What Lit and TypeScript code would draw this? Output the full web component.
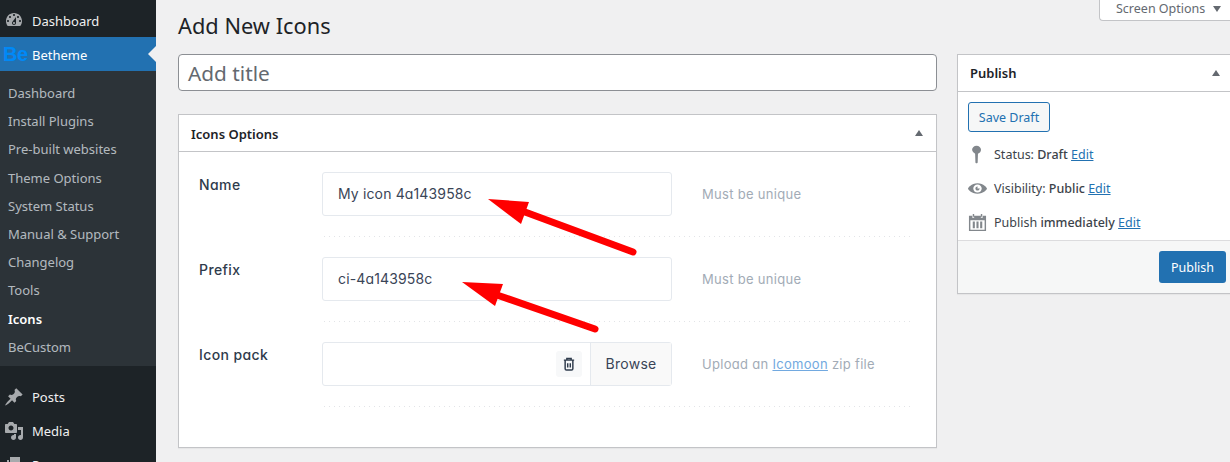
import { LitElement, css, html, svg } from "lit";
import { customElement } from "lit/decorators.js";

const SUBMENU = [
  "Dashboard",
  "Install Plugins",
  "Pre-built websites",
  "Theme Options",
  "System Status",
  "Manual & Support",
  "Changelog",
  "Tools",
  "Icons",
  "BeCustom",
];

const ICONS = {
  dashboard:
    "M3.76 16h12.48c1.1-1.37 1.76-3.11 1.76-5 0-4.42-3.58-8-8-8s-8 3.58-8 8c0 1.89.66 3.63 1.76 5zM10 4c.55 0 1 .45 1 1s-.45 1-1 1-1-.45-1-1 .45-1 1-1zM6 6c.55 0 1 .45 1 1s-.45 1-1 1-1-.45-1-1 .45-1 1-1zm8 0c.55 0 1 .45 1 1s-.45 1-1 1-1-.45-1-1 .45-1 1-1zm-5.37 5.55L12 7v6c0 1.1-.9 2-2 2s-2-.9-2-2c0-.57.24-1.08.63-1.45zM4 10c.55 0 1 .45 1 1s-.45 1-1 1-1-.45-1-1 .45-1 1-1zm12 0c.55 0 1 .45 1 1s-.45 1-1 1-1-.45-1-1 .45-1 1-1zm-5 3c0-.55-.45-1-1-1s-1 .45-1 1 .45 1 1 1 1-.45 1-1z",
  posts:
    "M10.44 3.02l1.82-1.82 6.36 6.35-1.83 1.82c-1.05-.68-2.48-.57-3.41.36l-.75.75c-.92.93-1.04 2.35-.35 3.41l-1.83 1.82-2.41-2.41-2.8 2.79c-.42.42-3.38 2.71-3.8 2.29s1.86-3.39 2.28-3.81l2.79-2.79L4.1 9.36l1.83-1.82c1.05.69 2.48.57 3.4-.36l.75-.75c.93-.92 1.05-2.35.36-3.41z",
  media:
    "M13 11V4c0-.55-.45-1-1-1h-1.67L9 1H5L3.67 3H2c-.55 0-1 .45-1 1v7c0 .55.45 1 1 1h10c.55 0 1-.45 1-1zM7 4.5c1.38 0 2.5 1.12 2.5 2.5S8.38 9.5 7 9.5 4.5 8.38 4.5 7 5.62 4.5 7 4.5zM14 6h5v10.5c0 1.38-1.12 2.5-2.5 2.5S14 17.88 14 16.5s1.12-2.5 2.5-2.5c.17 0 .34.02.5.05V9h-3V6zm-4 8.05V13h2v3.5c0 1.38-1.12 2.5-2.5 2.5S7 17.88 7 16.5 8.12 14 9.5 14c.17 0 .34.02.5.05z",
  pages: "M6 15V2h10v13H6zm-1 1h8v2H3V5h2v11z",
  status:
    "M9 .8c2.600 0 4.700 1.900 4.700 4.300 0 1.900-1.300 3.500-3.200 4.100l-.3 9c0 .6-.5 1-1.200 1s-1.200-.4-1.200-1l-.3-9C6.600 8.600 4.300 7 4.300 5.100 4.300 2.700 6.400.8 9 .8z",
  eye: "M10 4.4C3.439 4.4 0 9.232 0 10c0 .766 3.439 5.6 10 5.6 6.56 0 10-4.834 10-5.6 0-.768-3.44-5.6-10-5.6zm0 9.907c-2.455 0-4.445-1.928-4.445-4.307S7.545 5.691 10 5.691s4.444 1.93 4.444 4.309-1.989 4.307-4.444 4.307zM10 10c-.407-.447.663-2.154 0-2.154-1.228 0-2.223.965-2.223 2.154s.995 2.154 2.223 2.154c1.227 0 2.223-.965 2.223-2.154 0-.547-1.877.379-2.223 0z",
  calendar:
    "M5 1h1.500v3H5zM13.500 1H15v3h-1.500zM1 3h3.500v2h2V3h7v2h2V3H19v16H1zM2.500 7.500V17.500h15V7.500zM5 9h2.200v7H5zM8.900 9h2.200v7H8.900zM12.800 9H15v7h-2.200z",
};

const icon = (d: string, cls = "") =>
  html`<svg class=${cls} viewBox="0 0 20 20" aria-hidden="true">
    ${svg`<path fill-rule="evenodd" d=${d}></path>`}
  </svg>`;

@customElement("app-root")
export class AppRoot extends LitElement {
  renderMenuItem(label: string, d: string) {
    return html`<div class="menu-item">${icon(d, "menu-icon")}<span>${label}</span></div>`;
  }

  renderField(label: string, value: string) {
    return html`
      <div class="field">
        <div class="field-label">${label}</div>
        <div class="input">${value}</div>
        <div class="field-desc">Must be unique</div>
      </div>
    `;
  }

  render() {
    return html`
      <div class="page">
        <aside class="sidebar">
          <div class="menu-item first">${icon(ICONS.dashboard, "menu-icon")}<span>Dashboard</span></div>
          <div class="menu-item current">
            <span class="be">Be</span><span>Betheme</span>
          </div>
          <div class="submenu">
            ${SUBMENU.map(
              (s) => html`<div class="sub-item ${s === "Icons" ? "active" : ""}">${s}</div>`
            )}
          </div>
          <div class="menu-lower">
            ${this.renderMenuItem("Posts", ICONS.posts)}
            ${this.renderMenuItem("Media", ICONS.media)}
            ${this.renderMenuItem("Pages", ICONS.pages)}
          </div>
        </aside>

        <main class="content">
          <div class="col-main">
            <h1>Add New Icons</h1>
            <div class="title-input">Add title</div>
            <section class="box options">
              <div class="box-head">
                <span>Icons Options</span><i class="caret up"></i>
              </div>
              <div class="form">
                ${this.renderField("Name", "My icon 4a143958c")}
                <div class="dots"></div>
                ${this.renderField("Prefix", "ci-4a143958c")}
                <div class="dots"></div>
                <div class="field">
                  <div class="field-label">Icon pack</div>
                  <div class="input upload">
                    <div class="upload-space">
                      <span class="trash">
                        <svg viewBox="0 0 14 16" aria-hidden="true">
                          <path d="M4.500 3V1.500h5V3M1 3.500h12M2.500 3.500v10a1.500 1.500 0 0 0 1.500 1.500h6a1.500 1.500 0 0 0 1.500-1.500v-10M5.500 7v5M8.500 7v5"></path>
                        </svg>
                      </span>
                    </div>
                    <div class="browse">Browse</div>
                  </div>
                  <div class="field-desc">Upload an <a>Icomoon</a> zip file</div>
                </div>
                <div class="dots"></div>
              </div>
            </section>
          </div>

          <div class="col-side">
            <div class="tab-row">
              <div class="screen-tab">Screen Options<i class="caret down"></i></div>
            </div>
            <section class="box publish">
              <div class="box-head">
                <span>Publish</span><i class="caret up"></i>
              </div>
              <div class="publish-body">
                <button class="draft">Save Draft</button>
                <div class="meta">
                  <div class="meta-row">${icon(ICONS.status, "meta-icon")}<span>Status: <b>Draft</b> <a>Edit</a></span></div>
                  <div class="meta-row">${icon(ICONS.eye, "meta-icon")}<span>Visibility: <b>Public</b> <a>Edit</a></span></div>
                  <div class="meta-row">${icon(ICONS.calendar, "meta-icon")}<span>Publish <b>immediately</b> <a>Edit</a></span></div>
                </div>
              </div>
              <div class="publish-foot"><button class="primary">Publish</button></div>
            </section>
          </div>
        </main>

        <!-- annotation arrows drawn on top of the form -->
        <svg class="arrows" viewBox="0 0 1230 462" aria-hidden="true">
          <path d="M488 199 L529 202 L521 224 Z" fill="#ff0000"></path>
          <line x1="525" y1="212" x2="633" y2="252" stroke="#ff0000" stroke-width="7" stroke-linecap="round"></line>
          <path d="M462 282 L503 284 L495 306 Z" fill="#ff0000"></path>
          <line x1="497" y1="295" x2="595" y2="329" stroke="#ff0000" stroke-width="7" stroke-linecap="round"></line>
        </svg>
      </div>
    `;
  }

  static styles = css`
    :host {
      display: block;
      width: 1230px;
      height: 462px;
      overflow: hidden;
      font-family: "Noto Sans", "Open Sans", sans-serif;
      font-size: 13px;
      color: #3c434a;
      background: #f0f0f1;
    }
    .page {
      position: relative;
      display: flex;
      height: 462px;
      overflow: hidden;
    }

    .sidebar {
      flex: 0 0 156px;
      background: #1d2327;
      color: #f0f0f1;
      height: 462px;
      overflow: hidden;
    }
    .menu-item {
      position: relative;
      display: flex;
      align-items: center;
      height: 34px;
      padding-left: 32px;
    }
    .menu-item.first {
      height: 37px;
      padding-top: 5px;
      box-sizing: border-box;
    }
    .menu-icon {
      position: absolute;
      left: 4px;
      width: 20px;
      height: 20px;
      fill: #a7aaad;
    }
    .menu-item.first .menu-icon {
      top: 10px;
    }
    .current {
      box-sizing: border-box;
      padding-top: 2px;
      background: #2271b1;
      color: #fff;
    }
    .current::after {
      content: "";
      position: absolute;
      right: 0;
      top: 9px;
      border: 8px solid transparent;
      border-right-color: #f0f0f1;
      border-left-width: 0;
    }
    .be {
      position: absolute;
      left: 3px;
      top: 6px;
      font-family: "Liberation Sans", sans-serif;
      font-weight: 700;
      font-size: 20px;
      letter-spacing: -0.5px;
      color: #0089f7;
    }
    .submenu {
      background: #2c3338;
      padding: 8px 0 5px;
    }
    .sub-item {
      height: 28.2px;
      line-height: 28px;
      padding-left: 8px;
      color: rgba(240, 246, 252, 0.7);
    }
    .sub-item.active {
      color: #fff;
      font-weight: 600;
    }
    .menu-lower {
      padding-top: 14px;
    }

    .content {
      flex: 1;
      display: flex;
      gap: 20px;
      padding-left: 22px;
      min-width: 0;
    }
    .col-main {
      flex: 0 0 759px;
    }
    .col-side {
      flex: 1;
      min-width: 0;
    }
    h1 {
      margin: 0;
      height: 54px;
      line-height: 52px;
      font-size: 21.8px;
      font-weight: 400;
      color: #1d2327;
    }
    .title-input {
      box-sizing: border-box;
      height: 37px;
      padding-left: 9px;
      line-height: 37px;
      font-size: 20.8px;
      color: #646970;
      background: #fff;
      border: 1px solid #8c8f94;
      border-radius: 4px;
    }
    .box {
      box-sizing: border-box;
      background: #fff;
      border: 1px solid #c3c4c7;
      box-shadow: 0 1px 1px rgba(0, 0, 0, 0.04);
    }
    .box-head {
      box-sizing: border-box;
      display: flex;
      align-items: center;
      justify-content: space-between;
      height: 37px;
      padding: 0 12px;
      font-weight: 600;
      color: #1d2327;
      border-bottom: 1px solid #c3c4c7;
    }
    .options .box-head span {
      padding-top: 1px;
    }
    .caret {
      display: block;
      width: 0;
      height: 0;
      border-left: 4px solid transparent;
      border-right: 4px solid transparent;
    }
    .caret.up {
      border-bottom: 6px solid #646970;
      margin-right: 1px;
    }
    .caret.down {
      border-top: 6px solid #646970;
      margin-left: 8px;
    }

    .options {
      margin-top: 23px;
      height: 334px;
    }
    .form {
      padding: 20px 24px 0 20px;
      font-family: Inter, sans-serif;
      font-feature-settings: "cv11";
    }
    .field {
      display: flex;
      height: 44px;
    }
    .field-label {
      flex: 0 0 123px;
      padding-top: 4px;
      font-size: 14px;
      letter-spacing: 0.4px;
      font-weight: 500;
      color: #2f3b4c;
    }
    .input {
      box-sizing: border-box;
      flex: 0 0 350px;
      display: flex;
      align-items: center;
      padding-left: 15px;
      padding-bottom: 2px;
      font-size: 14px;
      letter-spacing: 0.14px;
      color: #3a4557;
      background: #fff;
      border: 1px solid #e5e9ee;
      border-radius: 3px;
    }
    .input.upload {
      padding: 0;
      align-items: stretch;
    }
    .upload-space {
      flex: 1;
      display: flex;
      align-items: center;
      justify-content: flex-end;
      padding-right: 8px;
    }
    .trash {
      display: flex;
      align-items: center;
      justify-content: center;
      width: 26px;
      height: 26px;
      background: #f7f8f9;
      border-radius: 3px;
    }
    .trash svg {
      width: 12px;
      height: 14px;
      fill: none;
      stroke: #2f3b4c;
      stroke-width: 1.700;
    }
    .browse {
      flex: 0 0 80px;
      display: flex;
      align-items: center;
      justify-content: center;
      padding-bottom: 1px;
      font-size: 14px;
      letter-spacing: 0.3px;
      background: #f9f9f9;
      border-left: 1px solid #e5e9ee;
      color: #3a4557;
    }
    .field-desc {
      padding: 0 0 0 30px;
      align-self: center;
      font-size: 13px;
      letter-spacing: 0.3px;
      color: #a2abb6;
    }
    .field-desc a {
      color: #72a9e0;
      text-decoration: underline;
    }
    .dots {
      height: 41px;
      margin-left: 123px;
      box-sizing: border-box;
      background-image: radial-gradient(circle, #e2e4e7 0.6px, transparent 0.8px);
      background-size: 5px 1px;
      background-repeat: repeat-x;
      background-position: 0 20px;
    }

    .tab-row {
      height: 54px;
      display: flex;
      justify-content: flex-end;
      align-items: flex-start;
    }
    .screen-tab {
      box-sizing: border-box;
      display: flex;
      align-items: center;
      width: 131px;
      height: 21px;
      padding: 0 0 3px 16px;
      font-size: 12.500px;
      color: #646970;
      background: #fff;
      border: 1px solid #c3c4c7;
      border-top: 0;
      border-right: 0;
      border-radius: 0 0 0 4px;
    }
    .publish {
      box-sizing: border-box;
      height: 240px;
      display: flex;
      flex-direction: column;
      border-right: 0;
    }
    .publish .box-head {
      flex: none;
      padding-right: 9px;
    }
    .publish-body {
      flex: 1;
      padding: 10px 10px 0;
    }
    .draft {
      box-sizing: border-box;
      display: block;
      width: 82px;
      height: 30px;
      padding: 0;
      font: inherit;
      font-size: 12.500px;
      color: #2271b1;
      background: #f6f7f7;
      border: 1px solid #2271b1;
      border-radius: 3px;
    }
    .meta {
      padding-top: 5px;
    }
    .meta-row {
      display: flex;
      align-items: center;
      gap: 7px;
      height: 34px;
      font-size: 12.500px;
      color: #3c434a;
    }
    .meta-row b {
      font-weight: 500;
    }
    .meta-row a {
      color: #2271b1;
      text-decoration: underline;
    }
    .meta-icon {
      flex: none;
      width: 19px;
      height: 19px;
      fill: #82878c;
    }
    .publish-foot {
      flex: none;
      box-sizing: border-box;
      height: 53px;
      display: flex;
      justify-content: flex-end;
      align-items: center;
      padding-right: 4px;
      background: #f6f7f7;
      border-top: 1px solid #dcdcde;
    }
    .primary {
      box-sizing: border-box;
      width: 67px;
      height: 32px;
      padding: 0;
      font: inherit;
      font-size: 12.500px;
      color: #fff;
      background: #2271b1;
      border: 0;
      border-radius: 3px;
    }

    .arrows {
      position: absolute;
      left: 0;
      top: 0;
      width: 1230px;
      height: 462px;
      pointer-events: none;
    }
  `;
}

declare global {
  interface HTMLElementTagNameMap {
    "app-root": AppRoot;
  }
}
